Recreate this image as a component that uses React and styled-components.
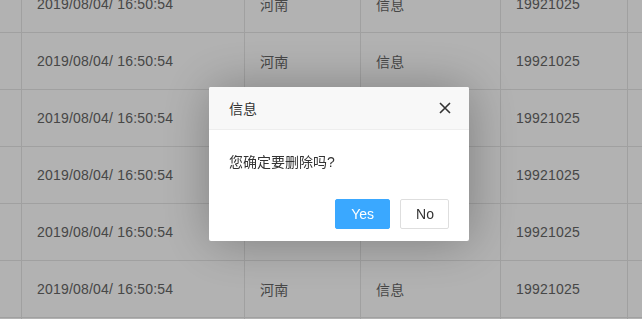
import styled, { createGlobalStyle } from 'styled-components'

const GlobalStyle = createGlobalStyle`
  html, body {
    margin: 0;
    padding: 0;
    background: #fff;
    overflow: hidden;
    font-family: "Liberation Sans", "Noto Sans CJK SC", Arial, sans-serif;
  }
`

const rows = Array.from({ length: 7 }, () => ({
  time: '2019/08/04/ 16:50:54',
  city: '河南',
  type: '信息',
  code: '19921025',
}))

function App() {
  return (
    <>
      <GlobalStyle />
      <Page>
        <Table>
          <colgroup>
            <col style={{ width: '100px' }} />
            <col style={{ width: '223px' }} />
            <col style={{ width: '116px' }} />
            <col style={{ width: '140px' }} />
            <col style={{ width: '127px' }} />
            <col style={{ width: '100px' }} />
          </colgroup>
          <tbody>
            {rows.map((r, i) => (
              <tr key={i}>
                <Cell />
                <Cell>{r.time}</Cell>
                <Cell>{r.city}</Cell>
                <Cell>{r.type}</Cell>
                <Cell>{r.code}</Cell>
                <Cell />
              </tr>
            ))}
          </tbody>
        </Table>
      </Page>
      <Mask />
      <Dialog>
        <Title>
          <span>信息</span>
          <Close aria-label="close">
            <svg width="12" height="12" viewBox="0 0 12 12">
              <path d="M1 1 L11 11 M11 1 L1 11" stroke="#333" strokeWidth="1.6" fill="none" />
            </svg>
          </Close>
        </Title>
        <Content>您确定要删除吗?</Content>
        <Buttons>
          <Btn primary>Yes</Btn>
          <Btn>No</Btn>
        </Buttons>
      </Dialog>
    </>
  )
}

const Page = styled.div`
  width: 642px;
  height: 319px;
  overflow: hidden;
`

const Table = styled.table`
  border-collapse: collapse;
  table-layout: fixed;
  margin-top: -25px;
  margin-left: -79px;
  width: 806px;
`

const Cell = styled.td`
  height: 57px;
  padding: 0 15px;
  border: 1px solid #e6e6e6;
  color: #666;
  font-size: 14px;
  letter-spacing: 0.2px;
  white-space: nowrap;
  box-sizing: border-box;
`

const Mask = styled.div`
  position: fixed;
  inset: 0;
  background: rgba(0, 0, 0, 0.3);
`

const Dialog = styled.div`
  position: fixed;
  left: 209px;
  top: 87px;
  width: 260px;
  background: #fff;
  border-radius: 2px;
  box-shadow: 1px 1px 50px rgba(0, 0, 0, 0.3);
`

const Title = styled.div`
  display: flex;
  align-items: center;
  justify-content: space-between;
  height: 42px;
  padding: 0 18px 0 20px;
  background: #f8f8f8;
  border-bottom: 1px solid #eee;
  border-radius: 2px 2px 0 0;
  color: #333;
  font-size: 14px;
`

const Close = styled.span`
  display: flex;
  width: 12px;
  height: 12px;
`

const Content = styled.div`
  padding: 20px;
  line-height: 24px;
  font-size: 14px;
  color: #333;
`

const Buttons = styled.div`
  display: flex;
  justify-content: flex-end;
  padding: 0 15px 12px;
`

const Btn = styled.a`
  height: 28px;
  line-height: 28px;
  margin: 5px 5px 0;
  padding: 0 ${({ primary }) => (primary ? '15px' : '14px 0 15px')};
  border: 1px solid ${({ primary }) => (primary ? '#3aa8ff' : '#dedede')};
  background: ${({ primary }) => (primary ? '#3aa8ff' : '#fff')};
  color: ${({ primary }) => (primary ? '#fff' : '#333')};
  border-radius: 2px;
  font-size: 14px;
  cursor: pointer;
`

export default App
